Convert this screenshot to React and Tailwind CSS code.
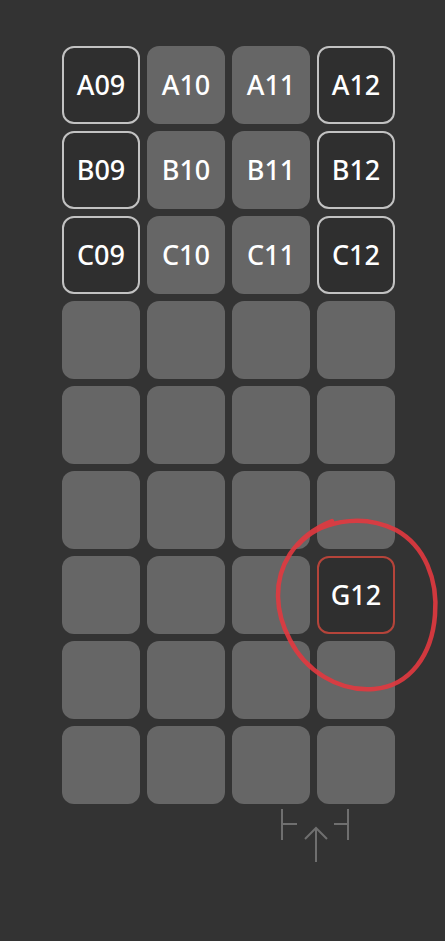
const rows = [
  ["A09", "A10", "A11", "A12"],
  ["B09", "B10", "B11", "B12"],
  ["C09", "C10", "C11", "C12"],
  ["", "", "", ""],
  ["", "", "", ""],
  ["", "", "", ""],
  ["", "", "", "G12"],
  ["", "", "", ""],
  ["", "", "", ""],
];

const outlined = ["A09", "A12", "B09", "B12", "C09", "C12"];

const Seat = ({ label }) => {
  if (label === "G12") {
    return (
      <div className="size-[78px] rounded-[12px] border-2 border-[#b5443a] bg-[#2f2f2f] flex items-center justify-center text-white text-[27px] font-medium">
        {label}
      </div>
    );
  }
  if (outlined.includes(label)) {
    return (
      <div className="size-[78px] rounded-[12px] border-2 border-[#c2c2c2] bg-[#2f2f2f] flex items-center justify-center text-white text-[27px] font-medium">
        {label}
      </div>
    );
  }
  return (
    <div className="size-[78px] rounded-[12px] bg-[#666666] flex items-center justify-center text-white text-[27px] font-medium">
      {label}
    </div>
  );
};

const App = () => {
  return (
    <div
      className="relative w-[445px] h-[941px] bg-[#333333] overflow-hidden"
      style={{ fontFamily: '"Noto Sans", sans-serif' }}
    >
      <div className="pt-[46px] pl-[62px]">
        <div className="grid grid-cols-[repeat(4,78px)] gap-[7px]">
          {rows.flat().map((label, i) => (
            <Seat key={i} label={label} />
          ))}
        </div>
        <div className="ml-[215px] mt-[4px]">
          <svg width="72" height="56" viewBox="0 0 72 56" fill="none" stroke="#6f6f6f" strokeWidth="2">
            <path d="M5 1 V32 M5 16 H20" />
            <path d="M71 1 V32 M71 16 H57" />
            <path d="M39 54 V20 M28 31 L39 20 L50 31" />
          </svg>
        </div>
      </div>
      <svg
        className="absolute left-0 top-0 pointer-events-none"
        width="445"
        height="941"
        fill="none"
      >
        <path
          d="M298 545 C318 522 360 512 396 530 C425 546 438 580 435 615 C432 655 410 686 374 689 C338 692 305 670 290 640 C275 612 273 580 290 554 C300 539 314 528 332 521"
          stroke="#e2383f"
          strokeWidth="4.5"
          strokeLinecap="round"
          opacity="0.9"
        />
      </svg>
    </div>
  );
};

export default App;
